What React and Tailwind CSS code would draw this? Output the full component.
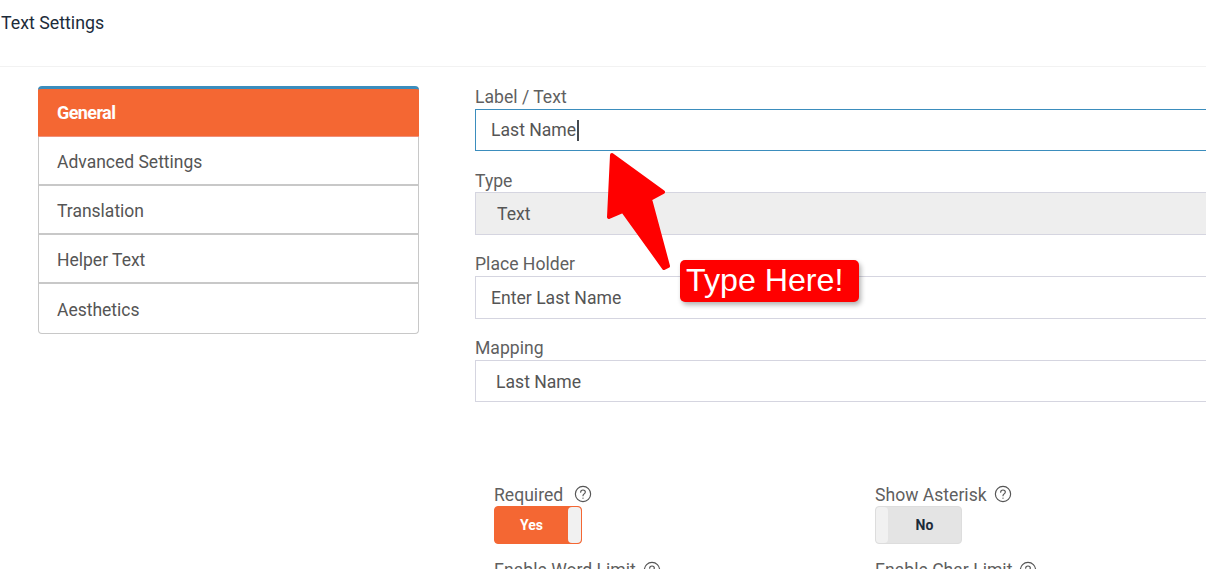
import React from "react";

function Field({ label, value, valueClass = "pl-[15px]", inputClass = "h-[42.5px] border-[#d5d5e0] bg-white", labelClass = "leading-[16px]", caret = false, mt = "" }) {
  return (
    <div className={mt}>
      <div className={`h-[20px] text-[17.6px] text-[#5f5f5f] ${labelClass}`}>{label}</div>
      <div className={`flex w-[800px] items-center border ${inputClass} ${valueClass} text-[17.6px] text-[#555555]`}>
        <span>{value}</span>
        {caret && <span className="ml-[1px] h-[21px] w-[2px] bg-[#444a50]" />}
      </div>
    </div>
  );
}

function Help({ className = "" }) {
  return (
    <svg className={className} width="18" height="18" viewBox="0 0 17 17" fill="none" stroke="#555555" strokeWidth="1.1">
      <circle cx="8.5" cy="8.5" r="7.2" />
      <path d="M6.3 6.8c0-1.3 1-2.1 2.2-2.1s2.2.8 2.2 2c0 1.7-2.2 1.7-2.2 3.4" strokeLinecap="round" />
      <circle cx="8.5" cy="12.4" r="0.6" fill="#555555" stroke="none" />
    </svg>
  );
}

function Tab({ children }) {
  return (
    <div className="flex h-[49px] items-center border-b-2 border-[#c8c8c8] pl-[18px] pt-[4px] text-[17.5px] text-[#555555] last:border-b-0">
      {children}
    </div>
  );
}

export default function App() {
  return (
    <div className="relative h-[569px] w-[1206px] overflow-hidden bg-white font-['Roboto',sans-serif]">
      <header className="flex h-[67px] items-start border-b border-[#f2f2f2] pl-[1px] pt-[12px] text-[17.8px] leading-[22px] text-[#1c2b3a]">
        Text Settings
      </header>

      <div className="flex pl-[38px] pt-[19px]">
        <aside className="w-[381px] shrink-0">
          <div className="flex h-[51px] items-center rounded-t-[4px] border-t-[3px] border-b border-t-[#3b8dbd] border-b-[#f0907a] bg-[#f46733] pl-[19px] text-[18px] font-bold tracking-[-0.6px] text-white">
            General
          </div>
          <div className="rounded-b-[4px] border-x border-b border-[#c8c8c8]">
            <Tab>Advanced Settings</Tab>
            <Tab>Translation</Tab>
            <Tab>Helper Text</Tab>
            <Tab>Aesthetics</Tab>
          </div>
        </aside>

        <main className="ml-[56px] w-[800px] shrink-0 pt-[3px]">
          <Field label="Label / Text" value="Last Name" caret inputClass="h-[42px] border-[#3b8dbd] bg-white" />
          <Field label="Type" value="Text" labelClass="leading-[18px]" inputClass="h-[43px] border-[#d5d5e0] bg-[#eeeeee]" valueClass="pl-[21px] pt-[2px]" mt="mt-[21px]" />
          <Field label="Place Holder" value="Enter Last Name" valueClass="pl-[15px] pt-[1px]" inputClass="h-[43px] border-[#d5d5e0] bg-white" mt="mt-[21px]" />
          <Field label="Mapping" value="Last Name" valueClass="pl-[20px] pt-[2px]" inputClass="h-[42px] border-[#d5d5e0] bg-white" mt="mt-[21px]" />

          <div className="ml-[19px] mt-[82px] flex">
            <div className="w-[381px]">
              <div className="flex h-[20px] items-center text-[17.6px] leading-[22px] text-[#5f5f5f]">
                <span className="pt-[2px]">Required</span>
                <Help className="ml-[11px]" />
              </div>
              <div className="mt-[2px] flex h-[38px] w-[88px] items-center rounded-[4px] border border-[#f46733] bg-[#f46733]">
                <span className="flex-1 text-center text-[14px] font-bold text-white">Yes</span>
                <span className="h-full w-[13px] rounded-[4px] bg-[#f1f1f1]" />
              </div>
              <div className="mt-[16px] flex h-[20px] items-center text-[17.6px] text-[#5f5f5f]">
                Enable Word Limit
                <Help className="ml-[7px]" />
              </div>
            </div>
            <div>
              <div className="flex h-[20px] items-center text-[17.6px] text-[#5f5f5f]">
                <span className="pt-[2px]">Show Asterisk</span>
                <Help className="ml-[7px]" />
              </div>
              <div className="mt-[2px] flex h-[38px] w-[87px] items-center rounded-[4px] border border-[#dddddd] bg-[#e4e4e4]">
                <span className="h-full w-[12px] rounded-[4px] bg-[#f1f1f1]" />
                <span className="flex-1 text-center text-[14px] font-bold text-[#1c2b3a]">No</span>
              </div>
              <div className="mt-[16px] flex h-[20px] items-center text-[17.6px] text-[#5f5f5f]">
                Enable Char Limit
                <Help className="ml-[7px]" />
              </div>
            </div>
          </div>
        </main>
      </div>

      <svg className="absolute left-[600px] top-[146px]" width="80" height="130" viewBox="600 146 80 130">
        <path
          d="M612 155 L663 192 L650 199 L668 266 L664 268 L623 211 L609 217 Z"
          fill="#ff0000"
          stroke="#ff0000"
          strokeWidth="4"
          strokeLinejoin="round"
        />
      </svg>

      <div className="absolute left-[680px] top-[260px] flex h-[42px] w-[179px] items-center rounded-[5px] bg-[#ff0000] pb-[2px] pl-[6px] font-['Liberation_Sans',sans-serif] text-[32.2px] leading-none text-white shadow-[2px_3px_5px_rgba(0,0,0,0.3)]">
        Type Here!
      </div>
    </div>
  );
}
